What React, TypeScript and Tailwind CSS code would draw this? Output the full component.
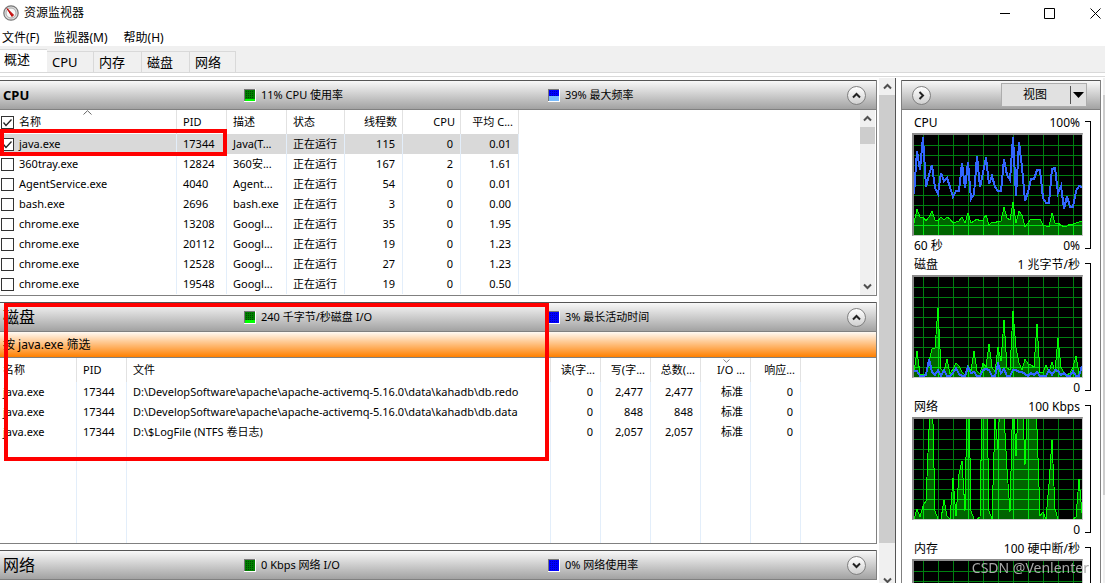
import React, { useState } from "react";

const cpuRows = [
  { name: "java.exe", pid: "17344", desc: "Java(T...", threads: 115, cpu: 0, avg: "0.01" },
  { name: "360tray.exe", pid: "12824", desc: "360安...", threads: 167, cpu: 2, avg: "1.61" },
  { name: "AgentService.exe", pid: "4040", desc: "Agent...", threads: 54, cpu: 0, avg: "0.01" },
  { name: "bash.exe", pid: "2696", desc: "bash.exe", threads: 3, cpu: 0, avg: "0.00" },
  { name: "chrome.exe", pid: "13208", desc: "Googl...", threads: 35, cpu: 0, avg: "1.95" },
  { name: "chrome.exe", pid: "20112", desc: "Googl...", threads: 19, cpu: 0, avg: "1.23" },
  { name: "chrome.exe", pid: "12528", desc: "Googl...", threads: 27, cpu: 0, avg: "1.23" },
  { name: "chrome.exe", pid: "19548", desc: "Googl...", threads: 19, cpu: 0, avg: "0.50" },
];

const diskRows = [
  {
    file: "D:\\DevelopSoftware\\apache\\apache-activemq-5.16.0\\data\\kahadb\\db.redo",
    read: "0",
    write: "2,477",
    total: "2,477",
  },
  {
    file: "D:\\DevelopSoftware\\apache\\apache-activemq-5.16.0\\data\\kahadb\\db.data",
    read: "0",
    write: "848",
    total: "848",
  },
  { file: "D:\\$LogFile (NTFS 卷日志)", read: "0", write: "2,057", total: "2,057" },
];

// one sample every 3 units, values in percent
const cpuFreq = [
  41, 84, 65, 98, 48, 60, 70, 47, 41, 62, 54, 57, 48, 38, 44, 44, 72, 47, 73, 36,
  41, 79, 48, 62, 78, 51, 59, 48, 44, 44, 76, 60, 55, 98, 39, 93, 68, 34, 43, 56,
  56, 65, 65, 37, 32, 32, 66, 67, 42, 49, 26, 39, 28, 28, 44, 49, 48,
];
const cpuUsage = [
  12, 26, 18, 18, 14, 18, 24, 15, 14, 18, 15, 18, 16, 12, 13, 14, 18, 12, 22, 12,
  14, 16, 14, 15, 20, 10, 13, 12, 14, 14, 28, 17, 15, 33, 12, 24, 20, 8, 12, 16,
  16, 16, 16, 10, 9, 8, 22, 12, 12, 10, 8, 9, 11, 11, 12, 13, 14,
];
const diskIo = [
  5, 26, 3, 2, 3, 16, 28, 29, 69, 8, 5, 18, 3, 8, 14, 11, 5, 2, 12, 6, 26, 6, 3,
  14, 10, 33, 10, 5, 30, 16, 57, 9, 7, 66, 29, 14, 7, 18, 13, 12, 10, 53, 4, 5,
  12, 5, 15, 5, 39, 10, 4, 2, 4, 10, 21, 3, 8,
];
const diskActive = [
  6, 6, 1, 1, 2, 18, 5, 2, 7, 1, 7, 1, 1, 4, 9, 3, 1, 1, 10, 4, 5, 1, 1, 7, 8, 7,
  1, 1, 13, 4, 8, 1, 1, 7, 7, 5, 5, 3, 1, 4, 2, 5, 1, 1, 1, 7, 2, 7, 6, 2, 4, 1,
  1, 6, 1, 1, 11,
];
const netIo = [
  0, 10, 2, 13, 18, 90, 140, 8, 0, 0, 19, 3, 0, 41, 3, 45, 58, 8, 170, 8, 0, 0, 2,
  170, 170, 8, 0, 100, 70, 150, 105, 50, 7, 130, 63, 130, 130, 54, 130, 150, 150,
  90, 3, 7, 0, 35, 79, 10, 0, 0, 0, 0, 0, 0, 2, 40, 6,
];

const toPoints = (values: number[]) =>
  values.map((v, i) => `${i * 3},${100 - v}`).join(" ");

const Graph: React.FC<{
  label: string;
  max: string;
  bottomLeft?: string;
  bottomRight?: string;
  area?: number[];
  line?: number[];
}> = ({ label, max, bottomLeft, bottomRight, area, line }) => (
  <div className="flex h-[142px] shrink-0 pl-[10px]">
    <div className="w-[171px]">
      <div className="flex h-5 items-center justify-between pl-0.5 pr-[3px]">
        <span>{label}</span>
        <span>{max}</span>
      </div>
      <div className="border-t-2 border-l-2 border-r border-b border-t-[#8c8c8c] border-l-[#8c8c8c] border-r-[#c8c8c8] border-b-[#c8c8c8] bg-black">
        <svg
          viewBox="0 0 168 100"
          preserveAspectRatio="none"
          shapeRendering="crispEdges"
          className="isolate block h-[100px] w-full"
        >
          {[10, 20, 30, 40, 50, 60, 70, 80, 90].map((y) => (
            <rect key={y} x="0" y={y} width="168" height="1" fill="#008010" />
          ))}
          {[9, 24, 39, 54, 69, 84, 99, 114, 129, 144, 159].map((x) => (
            <rect key={x} x={x} y="0" width="1" height="100" fill="#008010" />
          ))}
          {area && (
            <>
              <polygon
                points={`0,100 ${toPoints(area)} 168,100`}
                fill="#006400"
                className="mix-blend-plus-lighter"
              />
              <polyline
                points={toPoints(area)}
                fill="none"
                stroke="#00ff00"
                strokeWidth="1"
              />
            </>
          )}
          {line && (
            <polyline
              points={toPoints(line)}
              fill="none"
              stroke="#3366ff"
              strokeWidth="2"
            />
          )}
        </svg>
      </div>
      <div className="flex h-[19px] items-center justify-between pl-0.5 pr-[3px]">
        <span>{bottomLeft}</span>
        <span>{bottomRight}</span>
      </div>
    </div>
    <div className="ml-0.5 mt-2 h-32 w-[6px] border-y border-r border-black" />
  </div>
);

const Arrow: React.FC<{ dir: "up" | "down" | "right"; className?: string }> = ({
  dir,
  className = "text-[#505050]",
}) => (
  <svg width="9" height="9" viewBox="0 0 9 9" className={className}>
    <path
      d={
        dir === "up"
          ? "M1 6.5 4.5 3 8 6.5"
          : dir === "down"
            ? "M1 2.5 4.5 6 8 2.5"
            : "M2.5 1 6 4.5 2.5 8"
      }
      fill="none"
      stroke="currentColor"
      strokeWidth="2"
    />
  </svg>
);

const RoundButton: React.FC<{
  dir: "up" | "down" | "right";
  label: string;
  onClick?: () => void;
}> = ({ dir, label, onClick }) => (
  <button
    aria-label={label}
    onClick={onClick}
    className="flex size-[19px] shrink-0 items-center justify-center rounded-full border border-[#808080] bg-linear-to-b from-white to-[#d0d0d0]"
  >
    <Arrow dir={dir} className="text-[#222]" />
  </button>
);

const Meter: React.FC<{ color: "green" | "blue"; level: number }> = ({
  color,
  level,
}) => (
  <svg width="12" height="13" viewBox="0 0 12 13" className="shrink-0">
    <rect width="12" height="13" fill="#fff" />
    <rect width="11" height="12" fill="#777" />
    <rect
      x="1"
      y="1"
      width="10"
      height="11"
      fill={color === "green" ? "#008000" : "#0000ff"}
    />
    {[2, 4, 6, 8, 10].map((y) =>
      [2, 4, 6, 8].map((x) => (
        <rect
          key={`${x}-${y}`}
          x={x}
          y={y}
          width="1"
          height="1"
          fill={color === "green" ? "#004800" : "#0000b4"}
        />
      ))
    )}
    <rect
      x="1"
      y={12 - level}
      width="10"
      height={level}
      fill={color === "green" ? "#00ff00" : "#77bbff"}
    />
  </svg>
);

const SectionHeader: React.FC<{
  title: string;
  bold?: boolean;
  first: string;
  firstLevel: number;
  second: string;
  secondLevel: number;
  dir: "up" | "down";
}> = ({ title, bold, first, firstLevel, second, secondLevel, dir }) => (
  <div className="flex h-[30px] items-center border-t border-b border-t-[#555] border-b-[#808080] bg-linear-to-b/srgb from-[#f8f8f8] to-[#a2a2a2] pr-[10px]">
    <h2
      className={`w-[244px] pl-[3px] leading-5 ${bold ? "text-[13px] font-bold" : "text-base"}`}
    >
      {title}
    </h2>
    <div className="flex w-[304px] items-center gap-[5px]">
      <Meter color="green" level={firstLevel} />
      <span>{first}</span>
    </div>
    <div className="flex flex-1 items-center gap-[5px]">
      <Meter color="blue" level={secondLevel} />
      <span>{second}</span>
    </div>
    <RoundButton dir={dir} label={`${title} 展开/折叠`} />
  </div>
);

const CheckBox: React.FC<{
  checked: boolean;
  label: string;
  onChange: () => void;
}> = ({ checked, label, onChange }) => (
  <span className="grid size-[13px] shrink-0">
    <input
      type="checkbox"
      aria-label={label}
      checked={checked}
      onChange={onChange}
      className="col-start-1 row-start-1 size-[13px] appearance-none border border-[#333] bg-white"
    />
    {checked && (
      <svg
        viewBox="0 0 13 13"
        className="pointer-events-none col-start-1 row-start-1 size-[13px]"
      >
        <path d="M2.5 6.5 5 9.5 10.5 3.5" fill="none" stroke="#222" strokeWidth="1.3" />
      </svg>
    )}
  </span>
);

const th = "h-6 border-r border-[#e2e2e2] p-0 font-normal whitespace-nowrap";
const td = "h-5 border-r border-[#e3eefa] p-0 whitespace-nowrap";

const App: React.FC = () => {
  const [selected, setSelected] = useState<number[]>([0]);

  const toggle = (index: number) =>
    setSelected((prev) =>
      prev.includes(index) ? prev.filter((i) => i !== index) : [...prev, index]
    );

  return (
    <div className="flex h-screen flex-col overflow-hidden bg-white font-['Noto_Sans','Noto_Sans_CJK_SC',sans-serif] text-[11px] leading-4 text-black">
      <header className="flex h-[26px] shrink-0 items-center pl-[3px] text-xs">
        <svg width="16" height="16" viewBox="0 0 16 16">
          <circle cx="8" cy="8" r="7.2" fill="#ddd" stroke="#777" strokeWidth="1.2" />
          <circle cx="8" cy="8" r="5" fill="#f8f8f8" stroke="#aaa" />
          <path d="M4 3.5 10.5 10 9 11.5Z" fill="#d01818" stroke="#b00" />
        </svg>
        <h1 className="ml-[5px] flex-1">资源监视器</h1>
        <button aria-label="最小化" className="flex h-6 w-[45px] items-center justify-center">
          <svg width="10" height="11" viewBox="0 0 10 11">
            <path d="M0 5.5H10" stroke="#000" />
          </svg>
        </button>
        <button aria-label="最大化" className="flex h-6 w-[45px] items-center justify-center">
          <svg width="11" height="11" viewBox="0 0 11 11">
            <path d="M.5.5H10.5V10.5H.5Z" fill="none" stroke="#000" />
          </svg>
        </button>
        <button aria-label="关闭" className="flex h-6 w-[33px] items-center justify-end pr-1">
          <svg width="11" height="11" viewBox="0 0 11 11">
            <path d="M.5.5 10.5 10.5M10.5.5.5 10.5" stroke="#000" />
          </svg>
        </button>
      </header>

      <nav className="flex h-5 shrink-0 items-end gap-[14px] pl-0.5 text-xs">
        <button>文件(F)</button>
        <button className="pr-0.5">监视器(M)</button>
        <button>帮助(H)</button>
      </nav>

      <div className="flex h-[27px] shrink-0 items-end border-b border-[#d9d9d9] bg-[#f0f0f0] text-[13px]">
        <button className="h-[23px] w-[47px] border-t border-[#d9d9d9] bg-white pb-1 pl-1 text-left">
          概述
        </button>
        {["CPU", "内存", "磁盘", "网络"].map((tab) => (
          <button
            key={tab}
            className="h-[21px] w-12 border-t border-r border-[#d9d9d9] pl-[5px] text-left nth-2:w-[47px] last:w-[46px]"
          >
            {tab}
          </button>
        ))}
      </div>
      <div className="mt-[3px] h-0.5 shrink-0 border-t border-[#d9d9d9]" />

      <div className="flex min-h-0 flex-1">
        <main className="relative min-w-0 flex-1 space-y-1.5 overflow-hidden pt-0.5 pr-0.5">
          <section className="border-r border-b border-[#808080]">
            <SectionHeader
              title="CPU"
              bold
              first="11% CPU 使用率"
              firstLevel={2}
              second="39% 最大频率"
              secondLevel={5}
              dir="up"
            />
            <div className="flex justify-between">
              <table className="mb-px w-[519px] table-fixed border-separate border-spacing-0">
                <colgroup>
                  <col className="w-[177px]" />
                  <col className="w-[50px]" />
                  <col className="w-[60px]" />
                  <col className="w-[58px]" />
                  <col className="w-[58px]" />
                  <col className="w-[58px]" />
                  <col className="w-[58px]" />
                </colgroup>
                <thead>
                  <tr>
                    <th className={`${th} relative text-left`}>
                      <div className="flex items-center gap-[5px] pl-px">
                        <CheckBox checked label="全选" onChange={() => setSelected([])} />
                        <span>名称</span>
                      </div>
                      <svg
                        width="9"
                        height="5"
                        viewBox="0 0 9 5"
                        className="absolute left-[83px] top-0"
                      >
                        <path d="M.5 4.5 4.5.7 8.5 4.5" fill="none" stroke="#666" />
                      </svg>
                    </th>
                    <th className={`${th} pl-1.5 text-left`}>PID</th>
                    <th className={`${th} pl-1.5 text-left`}>描述</th>
                    <th className={`${th} pl-1.5 text-left`}>状态</th>
                    <th className={`${th} pr-[5px] text-right`}>线程数</th>
                    <th className={`${th} pr-[5px] text-right`}>CPU</th>
                    <th className={`${th} pr-[5px] text-right`}>平均 C...</th>
                  </tr>
                </thead>
                <tbody>
                  {cpuRows.map((row, i) => (
                    <tr key={i} className={selected.includes(i) ? "bg-[#d9d9d9]" : ""}>
                      <td className={td}>
                        <div className="flex items-center gap-[5px] pl-px">
                          <CheckBox
                            checked={selected.includes(i)}
                            label={row.name}
                            onChange={() => toggle(i)}
                          />
                          <span>{row.name}</span>
                        </div>
                      </td>
                      <td className={`${td} pl-1.5`}>{row.pid}</td>
                      <td className={`${td} pl-1.5`}>{row.desc}</td>
                      <td className={`${td} pl-1.5`}>正在运行</td>
                      <td className={`${td} pr-[7px] text-right`}>{row.threads}</td>
                      <td className={`${td} pr-[7px] text-right`}>{row.cpu}</td>
                      <td className={`${td} pr-[7px] text-right`}>{row.avg}</td>
                    </tr>
                  ))}
                </tbody>
              </table>
              <div className="mr-px flex w-[15px] flex-col items-center bg-[#f0f0f0]">
                <div className="flex h-[17px] items-center">
                  <Arrow dir="up" />
                </div>
                <div className="h-[17px] w-full bg-[#cdcdcd]" />
                <div className="mt-auto flex h-[17px] items-center">
                  <Arrow dir="down" />
                </div>
              </div>
            </div>
          </section>

          <section className="border-r border-b border-[#808080]">
            <SectionHeader
              title="磁盘"
              first="240 千字节/秒磁盘 I/O"
              firstLevel={3}
              second="3% 最长活动时间"
              secondLevel={0}
              dir="up"
            />
            <div className="flex h-[26px] items-center border-b border-[#808080] bg-linear-to-b/srgb from-[#fffaf4] to-[#ff8000] pl-[3px] text-xs">
              按 java.exe 筛选
            </div>
            <table className="w-[801px] table-fixed border-separate border-spacing-0">
              <colgroup>
                <col className="w-[77px]" />
                <col className="w-[50px]" />
                <col className="w-[424px]" />
                <col className="w-[50px]" />
                <col className="w-[50px]" />
                <col className="w-[50px]" />
                <col className="w-[50px]" />
                <col className="w-[50px]" />
              </colgroup>
              <thead>
                <tr>
                  <th className={`${th} pl-[3px] text-left`}>名称</th>
                  <th className={`${th} pl-1.5 text-left`}>PID</th>
                  <th className={`${th} pl-1.5 text-left`}>文件</th>
                  <th className={`${th} pr-[5px] text-right`}>读(字...</th>
                  <th className={`${th} pr-[5px] text-right`}>写(字...</th>
                  <th className={`${th} pr-[5px] text-right`}>总数(...</th>
                  <th className={`${th} relative pr-[5px] text-right`}>
                    I/O ...
                    <svg
                      width="7"
                      height="4"
                      viewBox="0 0 7 4"
                      className="absolute left-[22px] top-px"
                    >
                      <path d="M.5.5 3.5 3.3 6.5.5" fill="none" stroke="#888" />
                    </svg>
                  </th>
                  <th className={`${th} pr-[5px] text-right`}>响应...</th>
                </tr>
              </thead>
              <tbody>
                {diskRows.map((row) => (
                  <tr key={row.file}>
                    <td className={`${td} pl-[3px]`}>java.exe</td>
                    <td className={`${td} pl-1.5`}>17344</td>
                    <td className={`${td} pl-1.5`}>{row.file}</td>
                    <td className={`${td} pr-[7px] text-right`}>{row.read}</td>
                    <td className={`${td} pr-[7px] text-right`}>{row.write}</td>
                    <td className={`${td} pr-[7px] text-right`}>{row.total}</td>
                    <td className={`${td} pr-[7px] text-right`}>标准</td>
                    <td className={`${td} pr-[7px] text-right`}>0</td>
                  </tr>
                ))}
                <tr>
                  {[0, 1, 2, 3, 4, 5, 6, 7].map((i) => (
                    <td key={i} className="h-[101px] border-r border-[#e3eefa] p-0" />
                  ))}
                </tr>
              </tbody>
            </table>
          </section>

          <section className="border-r border-[#808080]">
            <SectionHeader
              title="网络"
              first="0 Kbps 网络 I/O"
              firstLevel={0}
              second="0% 网络使用率"
              secondLevel={0}
              dir="down"
            />
          </section>

          <div className="pointer-events-none absolute left-0 top-[51px] h-[27px] w-[227px] border-4 border-[#ff0000]" />
          <div className="pointer-events-none absolute left-1 top-[225px] h-[158px] w-[545px] border-4 border-[#ff0000]" />
        </main>

        <div className="flex w-4 shrink-0 flex-col items-center bg-[#f0f0f0]">
          <div className="flex h-[17px] items-center">
            <Arrow dir="up" />
          </div>
          <div className="h-[448px] w-full bg-[#cdcdcd]" />
          <div className="mt-auto flex h-[7px] items-start">
            <Arrow dir="down" />
          </div>
        </div>

        <aside className="flex w-[210px] shrink-0 border-l border-[#555] pl-[5px]">
          <div className="mt-0.5 w-[200px] overflow-hidden border-x border-[#808080] text-xs">
            <div className="flex h-[30px] items-center justify-between border-t border-b border-t-[#555] border-b-[#808080] bg-linear-to-b/srgb from-[#f8f8f8] to-[#a2a2a2] pl-[10px] pr-[13px]">
              <RoundButton dir="right" label="折叠图表" />
              <button className="flex h-6 w-[86px] items-center border border-[#adadad] bg-[#e1e1e1]">
                <span className="flex-1 pr-0.5 text-center">视图</span>
                <span className="flex h-[18px] w-4 items-center justify-center border-l border-[#555]">
                  <svg width="11" height="6" viewBox="0 0 11 6">
                    <path d="M0 0H11L5.5 6Z" />
                  </svg>
                </span>
              </button>
            </div>
            <div className="pt-[3px]">
              <Graph
                label="CPU"
                max="100%"
                bottomLeft="60 秒"
                bottomRight="0%"
                area={cpuUsage}
                line={cpuFreq}
              />
              <Graph
                label="磁盘"
                max="1 兆字节/秒"
                bottomRight="0"
                area={diskIo}
                line={diskActive}
              />
              <Graph label="网络" max="100 Kbps" bottomRight="0" area={netIo} />
              <Graph label="内存" max="100 硬中断/秒" />
            </div>
          </div>
          <div className="ml-auto w-0.5 bg-[#f0f0f0] pt-[17px]">
            <div className="h-[400px] bg-[#cdcdcd]" />
          </div>
        </aside>
      </div>

      <div className="pointer-events-none fixed right-4 bottom-[5px] text-sm leading-5 text-[#a8a8a8]">
        CSDN @Venlenter
      </div>
    </div>
  );
};

export default App;
